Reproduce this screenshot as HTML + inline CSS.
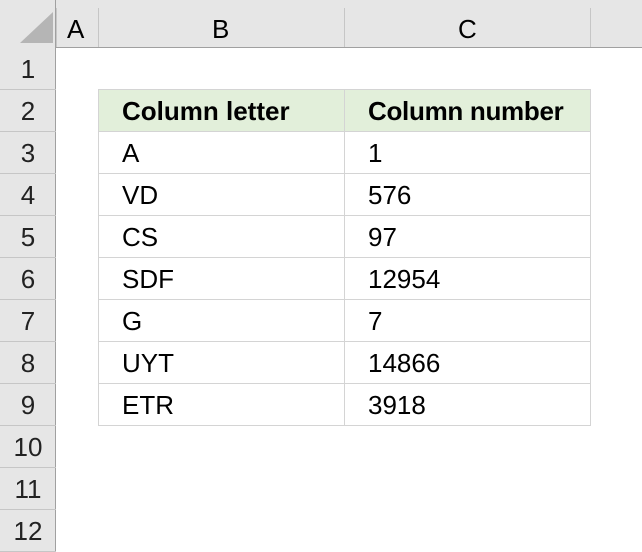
<!DOCTYPE html><html><head><style>
body{margin:0;width:642px;height:552px;background:#fff;font-family:"Liberation Sans",sans-serif;position:relative;overflow:hidden}
.a{position:absolute;box-sizing:border-box}
.hd{background:#e6e6e6;color:#222;text-align:center}
.t{position:absolute;font-size:26px;color:#000;line-height:30px}
</style></head><body>
<div class="a hd" style="left:0;top:0;width:642px;height:48px;border-bottom:1px solid #a0a0a0"></div>
<div class="a hd" style="left:0;top:0;width:56px;height:552px;border-right:1px solid #a0a0a0"></div>
<svg class="a" style="left:20px;top:12px" width="34" height="32"><polygon points="33,0 33,31 0,31" fill="#b5b5b5"/></svg>
<div class="a" style="left:56px;top:8px;width:1px;height:39px;background:#c6c6c6"></div>
<div class="a" style="left:98px;top:8px;width:1px;height:39px;background:#c6c6c6"></div>
<div class="a" style="left:344px;top:8px;width:1px;height:39px;background:#c6c6c6"></div>
<div class="a" style="left:590px;top:8px;width:1px;height:39px;background:#c6c6c6"></div>
<div class="t" style="left:67px;top:14px">A</div>
<div class="t" style="left:212px;top:14px">B</div>
<div class="t" style="left:458px;top:14px">C</div>
<div class="a" style="left:98px;top:89px;width:493px;height:42px;background:#e2efda"></div>
<div id="rows"></div>
<div class="t" style="left:122px;top:96px;font-weight:bold">Column letter</div>
<div class="t" style="left:368px;top:96px;font-weight:bold;letter-spacing:-0.3px">Column number</div>
<script>
var r=document.getElementById('rows'),h='';
for(var i=0;i<12;i++){var y=47+i*42;h+='<div class="a" style="left:0;top:'+(y+42)+'px;width:56px;height:1px;background:#c6c6c6"></div><div class="t" style="left:0;width:56px;text-align:center;top:'+(y+7)+'px;color:#222">'+(i+1)+'</div>';}
var d=[["A","1"],["VD","576"],["CS","97"],["SDF","12954"],["G","7"],["UYT","14866"],["ETR","3918"]];
for(var j=0;j<=8;j++){h+='<div class="a" style="left:98px;top:'+(89+j*42)+'px;width:493px;height:1px;background:#d4d4d4"></div>';}
h+='<div class="a" style="left:98px;top:89px;width:1px;height:336px;background:#d4d4d4"></div><div class="a" style="left:344px;top:89px;width:1px;height:336px;background:#d4d4d4"></div><div class="a" style="left:590px;top:89px;width:1px;height:336px;background:#d4d4d4"></div>';
for(var k=0;k<7;k++){var y=131+k*42;h+='<div class="t" style="left:122px;top:'+(y+7)+'px">'+d[k][0]+'</div><div class="t" style="left:368px;top:'+(y+7)+'px">'+d[k][1]+'</div>';}
r.innerHTML=h;
</script>
</body></html>
